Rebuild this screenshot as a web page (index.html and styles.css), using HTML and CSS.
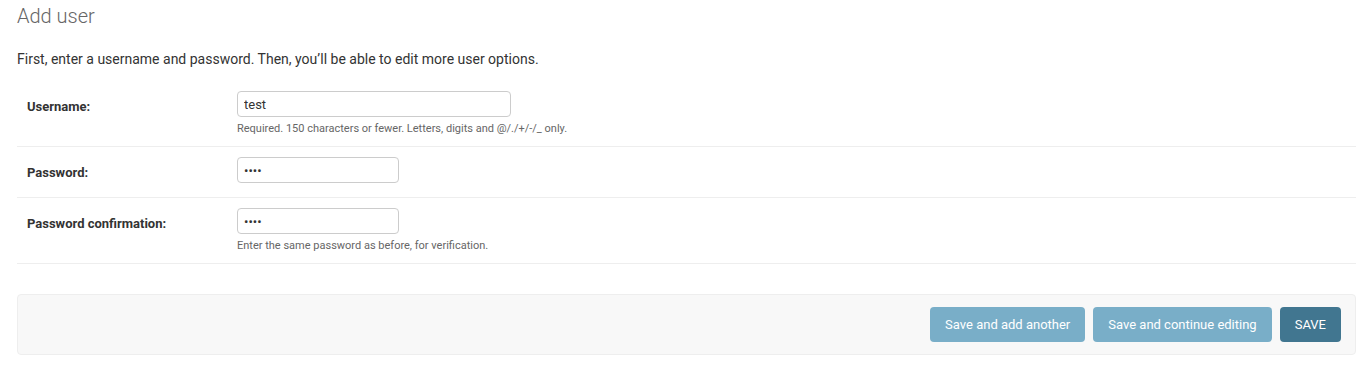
FILE: index.html
```html
<!DOCTYPE html>
<html lang="en">
<head>
<meta charset="utf-8">
<title>Add user</title>
<link rel="stylesheet" href="styles.css">
</head>
<body>
<div class="content">
  <h1 class="title">Add user</h1>
  <form class="user-form">
    <p class="intro">First, enter a username and password. Then, you’ll be able to edit more user options.</p>
    <fieldset class="module">
      <div class="form-row">
        <label class="row-label" for="id_username">Username:</label>
        <div class="field">
          <input class="text-input wide" type="text" id="id_username" value="test">
          <div class="help">Required. 150 characters or fewer. Letters, digits and @/./+/-/_ only.</div>
        </div>
      </div>
      <div class="form-row">
        <label class="row-label" for="id_password1">Password:</label>
        <div class="field">
          <input class="text-input narrow" type="password" id="id_password1" value="test">
        </div>
      </div>
      <div class="form-row">
        <label class="row-label" for="id_password2">Password confirmation:</label>
        <div class="field">
          <input class="text-input narrow" type="password" id="id_password2" value="test">
          <div class="help">Enter the same password as before, for verification.</div>
        </div>
      </div>
    </fieldset>
    <div class="submit-row">
      <button type="button" class="btn btn-light">Save and add another</button>
      <button type="button" class="btn btn-light">Save and continue editing</button>
      <button type="button" class="btn btn-default">SAVE</button>
    </div>
  </form>
</div>
</body>
</html>
```

FILE: styles.css
```css
* { box-sizing: border-box; }

html, body {
  margin: 0;
  padding: 0;
  background: #fff;
}

body {
  font-family: Roboto, "Liberation Sans", Arial, sans-serif;
  color: #333;
}

.content {
  padding: 5px 15px 0 17px;
}

.title {
  margin: 0 0 21px 0;
  font-size: 20px;
  line-height: 23px;
  font-weight: 300;
  color: #666;
}

.user-form {
  margin: 0;
}

.intro {
  margin: 0 0 12px 0;
  font-size: 14px;
  line-height: 20px;
  color: #333;
}

.module {
  margin: 0;
  padding: 0;
  border: none;
}

.form-row {
  display: flex;
  align-items: flex-start;
  padding: 10px;
  border-bottom: 1px solid #eee;
}

.row-label {
  width: 210px;
  flex: none;
  padding: 8px 10px 0 0;
  font-size: 13px;
  line-height: 16px;
  font-weight: bold;
  color: #333;
}

.field {
  display: flex;
  flex-direction: column;
  gap: 5px;
  min-height: 30px;
}

.text-input {
  height: 26px;
  padding: 5px 6px;
  border: 1px solid #ccc;
  border-radius: 4px;
  font-family: Roboto, "Liberation Sans", Arial, sans-serif;
  font-size: 13px;
  color: #333;
  background: #fff;
  outline: none;
}

.wide { width: 274px; }
.narrow { width: 162px; }

.help {
  font-size: 11px;
  line-height: 14px;
  color: #666;
}

.submit-row {
  display: flex;
  justify-content: flex-end;
  gap: 8px;
  margin-top: 30px;
  padding: 12px 14px;
  background: #f8f8f8;
  border: 1px solid #eee;
  border-radius: 4px;
}

.btn {
  height: 35px;
  padding: 0 15px;
  border: none;
  border-radius: 4px;
  font-family: Roboto, "Liberation Sans", Arial, sans-serif;
  font-size: 13px;
  line-height: 35px;
  color: #fff;
  cursor: pointer;
}

.btn-light { background: #79aec8; }
.btn-default { background: #417690; }
```
